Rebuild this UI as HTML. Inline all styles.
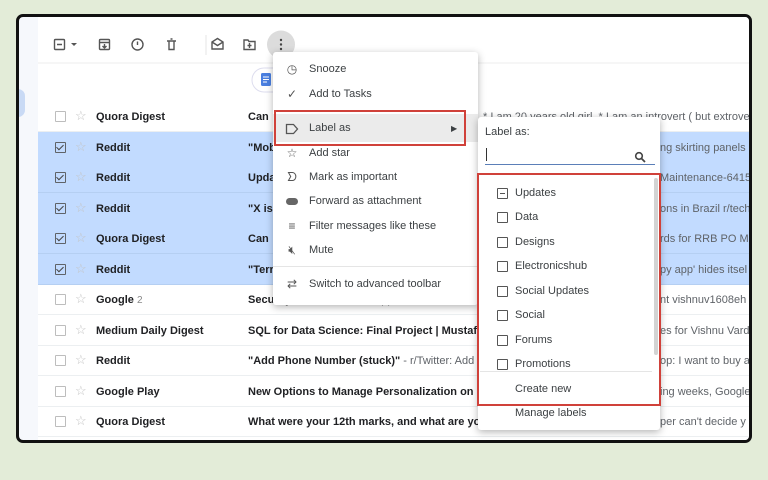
<!DOCTYPE html>
<html><head><style>
*{margin:0;padding:0;box-sizing:border-box}
body{width:768px;height:480px;background:#e3ecd8;position:relative;overflow:hidden;font-family:"Liberation Sans",Arial,sans-serif;color:#202124}
.frame{position:absolute;left:16px;top:14px;width:736px;height:429px;border:3px solid #111;border-radius:7px;background:#f6f8fc;overflow:hidden}
.inner{position:absolute;left:19px;top:0;right:0;bottom:0;background:#fff}
.a{position:absolute;white-space:nowrap}
.row{position:absolute;left:19px;right:0;height:31px;border-bottom:1px solid #eceff1;font-size:11px;white-space:nowrap}
.row.sel{background:#c2dbff;border-bottom-color:#b5cff2}
.cb{position:absolute;left:17px;top:10px;width:11px;height:11px;border:1.5px solid #bdbdbd;border-radius:1px}
.sel .cb{border-color:#5f6368}
.sel .cb:after{content:"";position:absolute;left:2px;top:0px;width:3px;height:6px;border:solid #444;border-width:0 1.5px 1.5px 0;transform:rotate(45deg)}
.st{position:absolute;left:37px;top:7px;color:#c4c4c4;font-size:13px}
.snd{position:absolute;left:58px;top:10px;font-weight:bold}
.sub{position:absolute;left:210px;top:10px;font-weight:bold}
.sub span{font-weight:normal;color:#5f6368}
.snip{position:absolute;top:10px;color:#5f6368}
.menu{position:absolute;background:#fff;box-shadow:0 2px 8px rgba(0,0,0,.3);border-radius:3px;font-size:11px;color:#3c4043}
.mi{position:absolute;left:0;right:0;height:24px;white-space:nowrap}
.mi .t{position:absolute;left:36px;top:7px}
.mi .i{position:absolute;left:12px;top:6px;width:14px;height:14px;color:#555;font-size:12px;text-align:center;line-height:14px}
.lb{position:absolute;left:19px;width:150px;height:20px;font-size:11px;color:#3c4043;white-space:nowrap}
.lb .c{position:absolute;left:0;top:5px;width:11px;height:11px;border:1.5px solid #555;border-radius:1px}
.lb .t{position:absolute;left:18px;top:4px}
.red{position:absolute;border:2px solid #d0413a}
</style></head><body>
<div class="frame">
<div class="a" style="left:-8px;top:72px;width:14px;height:28px;border-radius:14px;background:#c9daf5"></div>
<div class="inner"></div>
<svg class="a" style="left:0;top:0" width="736" height="90">
<g fill="none" stroke="#555" stroke-width="1.4">
<rect x="35.5" y="22.5" width="10" height="10" rx="1"/><line x1="38" y1="27.5" x2="43" y2="27.5"/>
<rect x="80.5" y="22.5" width="10" height="10" rx="1"/><line x1="80.5" y1="25.5" x2="90.5" y2="25.5"/><path d="M85.5 27v4M83.5 29l2 2 2-2"/>
<circle cx="118.5" cy="27.5" r="5.5"/><line x1="118.5" y1="24.5" x2="118.5" y2="28"/>
<path d="M148 24h9M150 24v8.5h5V24M151.5 22h2"/>
<path d="M193 25l5.5-3.5 5.5 3.5v7h-11z M193 25l5.5 3.5 5.5-3.5"/>
<path d="M225 23h4l1 1.5h6v8h-11z M230.5 26v5M228.5 28.5h4"/>
</g>
<path d="M52 26l3 3 3-3z" fill="#555"/>
<line x1="187" y1="18" x2="187" y2="38" stroke="#e5e5e5"/>
<circle cx="262" cy="27.5" r="14" fill="#dcdcdc"/>
<g fill="#444"><circle cx="262" cy="23" r="1.2"/><circle cx="262" cy="27.5" r="1.2"/><circle cx="262" cy="32" r="1.2"/></g>
<line x1="19" y1="46" x2="736" y2="46" stroke="#eee"/>
<rect x="233" y="51" width="60" height="24" rx="12" fill="#fff" stroke="#dde"/>
<rect x="242" y="56" width="10" height="13" rx="1.5" fill="#4a7fe0"/>
<g stroke="#fff" stroke-width="1"><line x1="244" y1="60" x2="250" y2="60"/><line x1="244" y1="62.5" x2="250" y2="62.5"/><line x1="244" y1="65" x2="248" y2="65"/></g>
</svg>
<div class="row" style="top:84px"><div class="cb"></div><div class="st">☆</div><div class="snd">Quora Digest</div><div class="sub">Can</div><div class="snip" style="left:445px">* I am 20 years old girl. * I am an introvert ( but extrover</div></div>
<div class="row sel" style="top:115px"><div class="cb"></div><div class="st">☆</div><div class="snd">Reddit</div><div class="sub">"Mob</div><div class="snip" style="left:622px">ng skirting panels</div></div>
<div class="row sel" style="top:145px"><div class="cb"></div><div class="st">☆</div><div class="snd">Reddit</div><div class="sub">Upda</div><div class="snip" style="left:622px">Maintenance-6415</div></div>
<div class="row sel" style="top:176px"><div class="cb"></div><div class="st">☆</div><div class="snd">Reddit</div><div class="sub">"X is</div><div class="snip" style="left:622px">ons in Brazil r/tech</div></div>
<div class="row sel" style="top:206px"><div class="cb"></div><div class="st">☆</div><div class="snd">Quora Digest</div><div class="sub">Can</div><div class="snip" style="left:622px">rds for RRB PO Ma</div></div>
<div class="row sel" style="top:237px"><div class="cb"></div><div class="st">☆</div><div class="snd">Reddit</div><div class="sub">"Terr</div><div class="snip" style="left:622px">py app' hides itsel</div></div>
<div class="row" style="top:267px"><div class="cb"></div><div class="st">☆</div><div class="snd">Google <span style="font-weight:normal;color:#888;font-size:10px">2</span></div><div class="sub">Security alert <span>- Microsoft apps &amp; services</span></div><div class="snip" style="left:622px">nt vishnuv1608eh</div></div>
<div class="row" style="top:298px"><div class="cb"></div><div class="st">☆</div><div class="snd">Medium Daily Digest</div><div class="sub">SQL for Data Science: Final Project | Mustafa</div><div class="snip" style="left:622px">es for Vishnu Vard</div></div>
<div class="row" style="top:328px"><div class="cb"></div><div class="st">☆</div><div class="snd">Reddit</div><div class="sub">"Add Phone Number (stuck)" <span>- r/Twitter: Add</span></div><div class="snip" style="left:622px">op: I want to buy a</div></div>
<div class="row" style="top:359px"><div class="cb"></div><div class="st">☆</div><div class="snd">Google Play</div><div class="sub">New Options to Manage Personalization on G</div><div class="snip" style="left:622px">ing weeks, Google</div></div>
<div class="row" style="top:389px"><div class="cb"></div><div class="st">☆</div><div class="snd">Quora Digest</div><div class="sub">What were your 12th marks, and what are yo</div><div class="snip" style="left:622px">per can't decide y</div></div>
</div>

<div class="menu" style="left:273px;top:52px;width:205px;height:253px">
<div class="mi" style="top:4px"><div class="i">◷</div><div class="t">Snooze</div></div>
<div class="mi" style="top:29px"><div class="i">✓</div><div class="t">Add to Tasks</div></div>
<div class="mi" style="top:62px;height:28px;background:#ebebeb"><svg class="a" style="left:12px;top:9px" width="14" height="12"><path d="M1.5 1.5h7l4 4.5-4 4.5h-7z" fill="none" stroke="#555" stroke-width="1.3"/></svg><div class="t" style="top:8px">Label as</div><div class="a" style="left:178px;top:10px;font-size:8px">▶</div></div>
<div class="mi" style="top:88px"><div class="i">☆</div><div class="t">Add star</div></div>
<div class="mi" style="top:112px"><div class="i">ᗤ</div><div class="t">Mark as important</div></div>
<div class="mi" style="top:136px"><div class="i"><span style="display:inline-block;width:12px;height:7px;border-radius:4px;background:#666"></span></div><div class="t">Forward as attachment</div></div>
<div class="mi" style="top:161px"><div class="i">≡</div><div class="t">Filter messages like these</div></div>
<div class="mi" style="top:185px"><div class="i">🔇︎</div><div class="t">Mute</div></div>
<div class="a" style="left:0;right:0;top:214px;border-top:1px solid #e5e5e5"></div>
<div class="mi" style="top:219px"><div class="i">⇄</div><div class="t">Switch to advanced toolbar</div></div>
</div>
<div class="red" style="left:274px;top:110px;width:192px;height:36px"></div>

<div class="menu" style="left:478px;top:117px;width:182px;height:313px">
<div class="a" style="left:7px;top:9px">Label as:</div>
<div class="a" style="left:8px;top:31px;width:1px;height:13px;background:#333"></div>
<div class="a" style="left:7px;top:47px;width:170px;border-top:1.5px solid #5b7fb8"></div>
<svg class="a" style="left:156px;top:34px" width="12" height="12"><circle cx="5" cy="5" r="3.3" fill="none" stroke="#444" stroke-width="1.6"/><line x1="7.5" y1="7.5" x2="11" y2="11" stroke="#444" stroke-width="1.8"/></svg>
<div class="a" style="left:176px;top:61px;width:4px;height:177px;background:#d3d3d3;border-radius:2px"></div>
<div class="lb" style="top:66px"><div class="c"><div class="a" style="left:1.5px;top:3.5px;width:5px;border-top:1.5px solid #555"></div></div><div class="t">Updates</div></div>
<div class="lb" style="top:90px"><div class="c"></div><div class="t">Data</div></div>
<div class="lb" style="top:115px"><div class="c"></div><div class="t">Designs</div></div>
<div class="lb" style="top:139px"><div class="c"></div><div class="t">Electronicshub</div></div>
<div class="lb" style="top:164px"><div class="c"></div><div class="t">Social Updates</div></div>
<div class="lb" style="top:188px"><div class="c"></div><div class="t">Social</div></div>
<div class="lb" style="top:213px"><div class="c"></div><div class="t">Forums</div></div>
<div class="lb" style="top:237px;height:16px;overflow:hidden"><div class="c"></div><div class="t">Promotions</div></div>
<div class="a" style="left:2px;right:8px;top:254px;border-top:1px solid #e5e5e5"></div>
<div class="a" style="left:37px;top:266px">Create new</div>
<div class="a" style="left:37px;top:290px">Manage labels</div>
</div>
<div class="red" style="left:477px;top:173px;width:184px;height:233px"></div>
</body></html>
